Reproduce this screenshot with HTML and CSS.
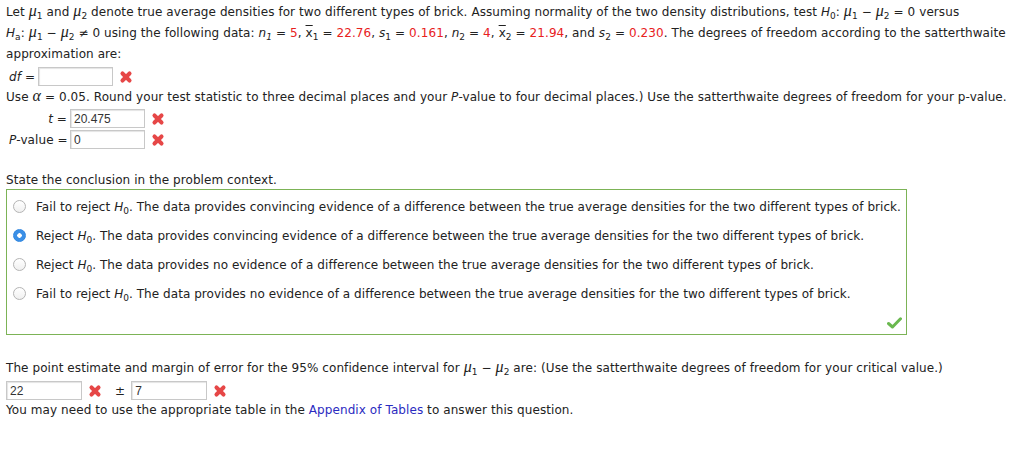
FILE: index.html
```html
<!DOCTYPE html>
<html lang="en">
<head>
    <meta charset="UTF-8">
    <title>Two-sample t test</title>
    <link rel="stylesheet" href="styles.css">
</head>
<body>
    <p class="intro">
        Let <span class="mu">μ</span><sub>1</sub> and <span class="mu">μ</span><sub>2</sub> denote true average densities for two different types of brick. Assuming normality of the two density distributions, test <i>H</i><sub>0</sub>: <span class="mu">μ</span><sub>1</sub> − <span class="mu">μ</span><sub>2</sub> = 0 versus<br>
        <i>H</i><sub>a</sub>: <span class="mu">μ</span><sub>1</sub> − <span class="mu">μ</span><sub>2</sub> ≠ 0 using the following data: <i>n</i><sub><i>1</i></sub> = <span class="val">5</span>, <span class="bar">x</span><sub>1</sub> = <span class="val">22.76</span>, <i>s</i><sub>1</sub> = <span class="val">0.161</span>, <i>n</i><sub>2</sub> = <span class="val">4</span>, <span class="bar">x</span><sub>2</sub> = <span class="val">21.94</span>, and <i>s</i><sub>2</sub> = <span class="val">0.230</span>. The degrees of freedom according to the satterthwaite<br>
        approximation are:
    </p>

    <div class="row df-row">
        <span class="lbl"><i>df</i> =</span>
        <input class="ans" type="text" value="">
        <span class="wrong"></span>
    </div>

    <p class="line">Use <span class="mu">α</span> = 0.05. Round your test statistic to three decimal places and your <i>P</i>-value to four decimal places.) Use the satterthwaite degrees of freedom for your p-value.</p>

    <div class="row">
        <span class="lbl right"><i>t</i> =</span>
        <input class="ans" type="text" value="20.475">
        <span class="wrong"></span>
    </div>
    <div class="row">
        <span class="lbl right"><i>P</i>-value =</span>
        <input class="ans" type="text" value="0">
        <span class="wrong"></span>
    </div>

    <p class="line state">State the conclusion in the problem context.</p>

    <div class="choices">
        <label class="opt"><span class="radio"></span><span>Fail to reject <i>H</i><sub>0</sub>. The data provides convincing evidence of a difference between the true average densities for the two different types of brick.</span></label>
        <label class="opt"><span class="radio on"></span><span>Reject <i>H</i><sub>0</sub>. The data provides convincing evidence of a difference between the true average densities for the two different types of brick.</span></label>
        <label class="opt"><span class="radio"></span><span>Reject <i>H</i><sub>0</sub>. The data provides no evidence of a difference between the true average densities for the two different types of brick.</span></label>
        <label class="opt"><span class="radio"></span><span>Fail to reject <i>H</i><sub>0</sub>. The data provides no evidence of a difference between the true average densities for the two different types of brick.</span></label>
        <span class="right-mark">
            <svg width="15" height="12" viewBox="0 0 15 12">
                <path d="M1.5 6.5 L5.5 10 L13.5 1.8" fill="none" stroke="#6ab84f" stroke-width="3" stroke-linecap="round" stroke-linejoin="round"/>
            </svg>
        </span>
    </div>

    <p class="line estimate">The point estimate and margin of error for the 95% confidence interval for <span class="mu">μ</span><sub>1</sub> − <span class="mu">μ</span><sub>2</sub> are: (Use the satterthwaite degrees of freedom for your critical value.)</p>

    <div class="row ci-row">
        <input class="ans" type="text" value="22">
        <span class="wrong"></span>
        <span class="pm">±</span>
        <input class="ans" type="text" value="7">
        <span class="wrong"></span>
    </div>

    <p class="line note">You may need to use the appropriate table in the <a href="#">Appendix of Tables</a> to answer this question.</p>
</body>
</html>
```

FILE: styles.css
```css
body {
    margin: 0;
    padding: 0 6px;
    font-family: Verdana, "DejaVu Sans", sans-serif;
    font-size: 12px;
    letter-spacing: 0.08px;
    color: #222;
    background: #fff;
}

p {
    margin: 0;
}

sub {
    font-size: 9px;
    vertical-align: -3px;
    line-height: 0;
}

.intro {
    margin-top: 2px;
    line-height: 21px;
    white-space: nowrap;
}

.mu {
    font-family: "Liberation Serif", serif;
    font-style: italic;
    font-size: 16px;
    line-height: 0;
}

.val {
    color: #e8211d;
}

.bar {
    text-decoration: overline;
}

.line {
    line-height: 21px;
}

.row {
    display: flex;
    align-items: center;
    height: 21px;
}

.lbl {
    padding-left: 3px;
    padding-right: 3px;
    white-space: nowrap;
}

.lbl.right {
    width: 58px;
    text-align: right;
}

.df-row {
    margin-top: 1px;
}

.ans {
    box-sizing: border-box;
    width: 75px;
    height: 19px;
    margin: 0;
    padding: 1px 3px 0;
    border: 1px solid #c8c8c8;
    box-shadow: inset 1px 1px 1px #e4e4e4;
    font-family: "Liberation Sans", Arial, sans-serif;
    font-size: 12px;
    color: #333;
    outline: none;
}

.wrong {
    display: inline-block;
    width: 13px;
    height: 12px;
    margin-left: 6px;
    position: relative;
}

.wrong::before,
.wrong::after {
    content: "";
    position: absolute;
    left: 0;
    top: 4px;
    width: 14px;
    height: 4px;
    border-radius: 2px;
    background: #e64747;
}

.wrong::before {
    transform: rotate(45deg);
}

.wrong::after {
    transform: rotate(-45deg);
}

.state {
    margin-top: 21px;
    line-height: 18px;
}

.choices {
    position: relative;
    width: 899px;
    height: 142px;
    border: 1px solid #7cb356;
    padding-top: 2px;
    box-sizing: content-box;
}

.opt {
    display: flex;
    align-items: center;
    height: 29px;
    padding-left: 6px;
    white-space: nowrap;
    letter-spacing: 0.05px;
}

.radio {
    box-sizing: border-box;
    width: 13px;
    height: 13px;
    margin-right: 10px;
    border: 1px solid #b4b4b4;
    border-radius: 50%;
    background: linear-gradient(#fff, #f0f0f0);
    flex-shrink: 0;
}

.radio.on {
    border-color: #2f86e0;
    background: radial-gradient(circle, #fff 0 2px, #3b8fe6 2.5px);
}

.right-mark {
    position: absolute;
    right: 4px;
    bottom: 5px;
    line-height: 0;
}

.estimate {
    margin-top: 23px;
}

.ci-row {
    margin-top: 1px;
}

.ci-row .ans {
    width: 76px;
}

.ci-row .wrong {
    margin-left: 6px;
}

.pm {
    margin-left: 14px;
    margin-right: 6px;
}

.note {
    line-height: 18px;
}

.note a {
    color: #2b2bbf;
    text-decoration: none;
}
```
